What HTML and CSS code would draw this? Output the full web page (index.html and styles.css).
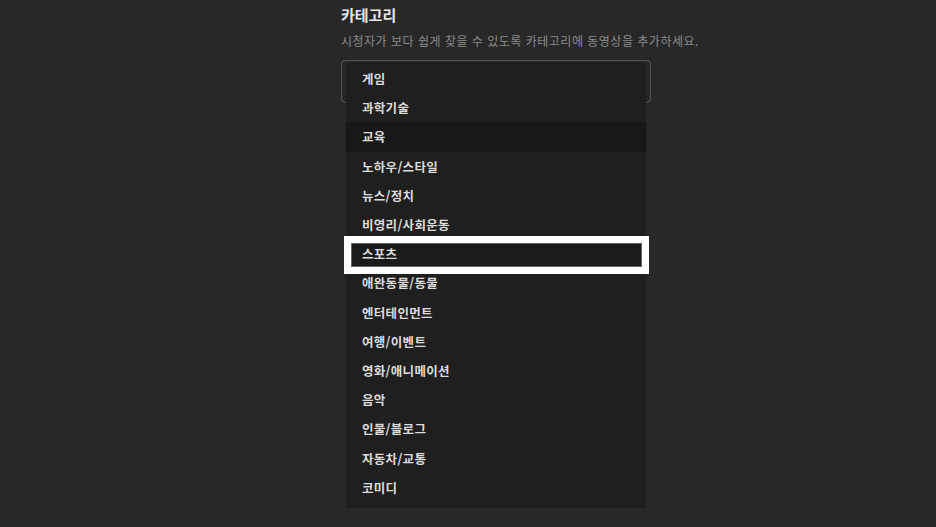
FILE: index.html
```html
<!DOCTYPE html>
<html lang="ko">
<head>
<meta charset="utf-8">
<link rel="stylesheet" href="styles.css">
</head>
<body>
<div class="page">
  <section class="field">
    <h2 class="title">카테고리</h2>
    <p class="desc">시청자가 보다 쉽게 찾을 수 있도록 카테고리에 동영상을 추가하세요.</p>
    <div class="select">
      <ul class="menu">
        <li class="item">게임</li>
        <li class="item">과학기술</li>
        <li class="item active">교육</li>
        <li class="item">노하우/스타일</li>
        <li class="item">뉴스/정치</li>
        <li class="item">비영리/사회운동</li>
        <li class="item marked"><span class="ring"></span><span class="label">스포츠</span></li>
        <li class="item">애완동물/동물</li>
        <li class="item">엔터테인먼트</li>
        <li class="item">여행/이벤트</li>
        <li class="item">영화/애니메이션</li>
        <li class="item">음악</li>
        <li class="item">인물/블로그</li>
        <li class="item">자동차/교통</li>
        <li class="item">코미디</li>
      </ul>
    </div>
  </section>
</div>
</body>
</html>
```

FILE: styles.css
```css
html, body {
  margin: 0;
  padding: 0;
  background: #282828;
  height: 100%;
  overflow: hidden;
}
body {
  font-family: "Noto Sans CJK KR", "Noto Sans", sans-serif;
}
.page {
  padding-left: 341px;
  padding-top: 4px;
}
.field {
  width: 310px;
}
.title {
  margin: 0;
  font-size: 15px;
  font-weight: 700;
  line-height: 22px;
  color: #e6e6e6;
}
.desc {
  margin: 6px 0 0;
  font-size: 12px;
  line-height: 18px;
  letter-spacing: 0.5px;
  color: #8c8c8c;
  white-space: nowrap;
}
.select {
  margin-top: 10px;
  height: 41px;
  border: 1px solid #555;
  border-radius: 4px;
  position: relative;
}
.menu {
  position: absolute;
  left: 4px;
  top: 1px;
  width: 300px;
  margin: 0;
  padding: 2px 0 6px;
  list-style: none;
  background: #1f1f1f;
  z-index: 2;
}
.item {
  position: relative;
  height: 29.2px;
  display: flex;
  align-items: center;
  padding-left: 16px;
  font-size: 12.5px;
  letter-spacing: 0.3px;
  font-weight: 700;
  color: #dcdcdc;
}
.item.active {
  background: #181818;
}
.item.marked {
  background: #1a1a1a;
}
.ring {
  position: absolute;
  left: -2px;
  right: -3px;
  top: -3px;
  bottom: -6px;
  border: 7px solid #ffffff;
  box-shadow: inset 0 0 0 1px #666;
}
.label {
  position: relative;
}
```
